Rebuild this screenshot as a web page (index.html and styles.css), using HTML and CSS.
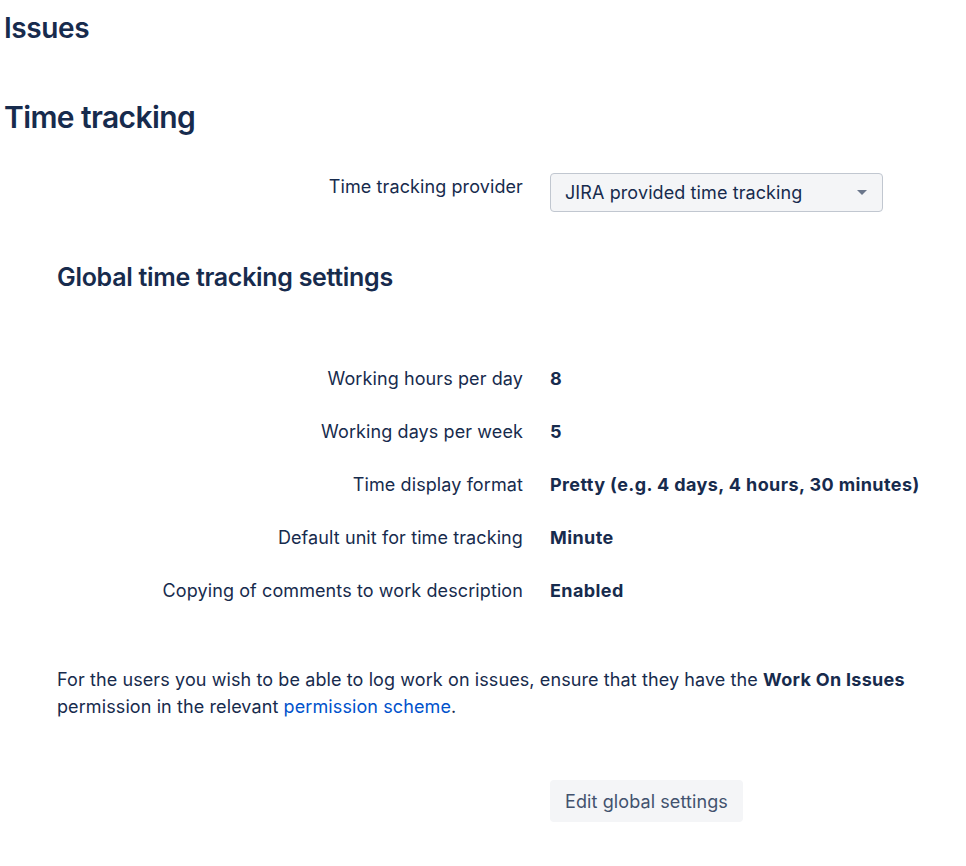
FILE: index.html
```html
<!DOCTYPE html>
<html lang="en">
<head>
    <meta charset="UTF-8">
    <meta name="viewport" content="width=device-width, initial-scale=1.0">
    <title>Issues - Time tracking</title>
    <link rel="stylesheet" href="styles.css">
</head>
<body>
    <div class="page">
        <h1 class="page-title">Issues</h1>
        <h2 class="section-title">Time tracking</h2>

        <!-- Provider -->
        <div class="field-row provider-row">
            <label class="field-label" for="provider">Time tracking provider</label>
            <div class="field-value">
                <div class="select" id="provider">
                    <span>JIRA provided time tracking</span>
                    <span class="caret"></span>
                </div>
            </div>
        </div>

        <div class="settings">
            <h3 class="settings-title">Global time tracking settings</h3>

            <div class="settings-list">
                <div class="field-row">
                    <div class="field-label">Working hours per day</div>
                    <div class="field-value strong">8</div>
                </div>
                <div class="field-row">
                    <div class="field-label">Working days per week</div>
                    <div class="field-value strong">5</div>
                </div>
                <div class="field-row">
                    <div class="field-label">Time display format</div>
                    <div class="field-value strong">Pretty (e.g. 4 days, 4 hours, 30 minutes)</div>
                </div>
                <div class="field-row">
                    <div class="field-label">Default unit for time tracking</div>
                    <div class="field-value strong">Minute</div>
                </div>
                <div class="field-row">
                    <div class="field-label">Copying of comments to work description</div>
                    <div class="field-value strong">Enabled</div>
                </div>
            </div>

            <p class="note">For the users you wish to be able to log work on issues, ensure that they have the <strong>Work On Issues</strong> permission in the relevant <a href="#">permission scheme</a>.</p>

            <div class="field-row button-row">
                <div class="field-label"></div>
                <div class="field-value">
                    <button class="button">Edit global settings</button>
                </div>
            </div>
        </div>
    </div>
</body>
</html>
```

FILE: styles.css
```css
/* General */
body {
    margin: 0;
    padding: 0;
    background: #fff;
    color: #172b4d;
    font-family: 'Inter', 'Noto Sans', sans-serif;
    font-size: 18px;
    line-height: 27px;
    letter-spacing: 0.1px;
}

.page {
    padding: 0 0 0 4px;
}

.page-title {
    font-size: 28px;
    font-weight: 600;
    line-height: 32px;
    margin: 0;
    padding-top: 12px;
    letter-spacing: -0.4px;
}

.section-title {
    font-size: 30px;
    font-weight: 600;
    line-height: 36px;
    margin: 55px 0 0;
    letter-spacing: -0.6px;
}

/* Rows */
.field-row {
    display: grid;
    grid-template-columns: 519px 1fr;
    column-gap: 27px;
    align-items: center;
}

.settings .field-row {
    grid-template-columns: 466px 1fr;
}

.field-label {
    text-align: right;
}

.strong {
    font-weight: 700;
    letter-spacing: 0.4px;
}

.provider-row {
    margin-top: 38px;
}

.provider-row .field-label {
    align-self: start;
}

/* Select */
.select {
    box-sizing: border-box;
    width: 333px;
    height: 39px;
    border: 1px solid #c1c7d0;
    border-radius: 4px;
    background: #f4f5f7;
    display: flex;
    align-items: center;
    justify-content: space-between;
    padding: 0 15px 0 14px;
    color: #172b4d;
}

.caret {
    width: 0;
    height: 0;
    border-left: 5px solid transparent;
    border-right: 5px solid transparent;
    border-top: 5px solid #6b778c;
}

/* Global settings */
.settings {
    padding-left: 53px;
}

.settings-title {
    font-size: 25px;
    font-weight: 600;
    line-height: 30px;
    margin: 50px 0 0;
    letter-spacing: -0.3px;
}

.settings-list {
    margin-top: 73px;
    display: flex;
    flex-direction: column;
    gap: 26px;
}

.note {
    margin: 62px 0 0;
    max-width: 870px;
}

.note strong {
    letter-spacing: 0.3px;
}

.note a {
    color: #0052cc;
    text-decoration: none;
}

.button-row {
    margin-top: 60px;
}

.button {
    font-family: inherit;
    font-size: 18px;
    letter-spacing: 0.1px;
    color: #42526e;
    background: #f4f5f7;
    border: none;
    border-radius: 4px;
    height: 42px;
    padding: 0 15px;
    cursor: pointer;
}
```
